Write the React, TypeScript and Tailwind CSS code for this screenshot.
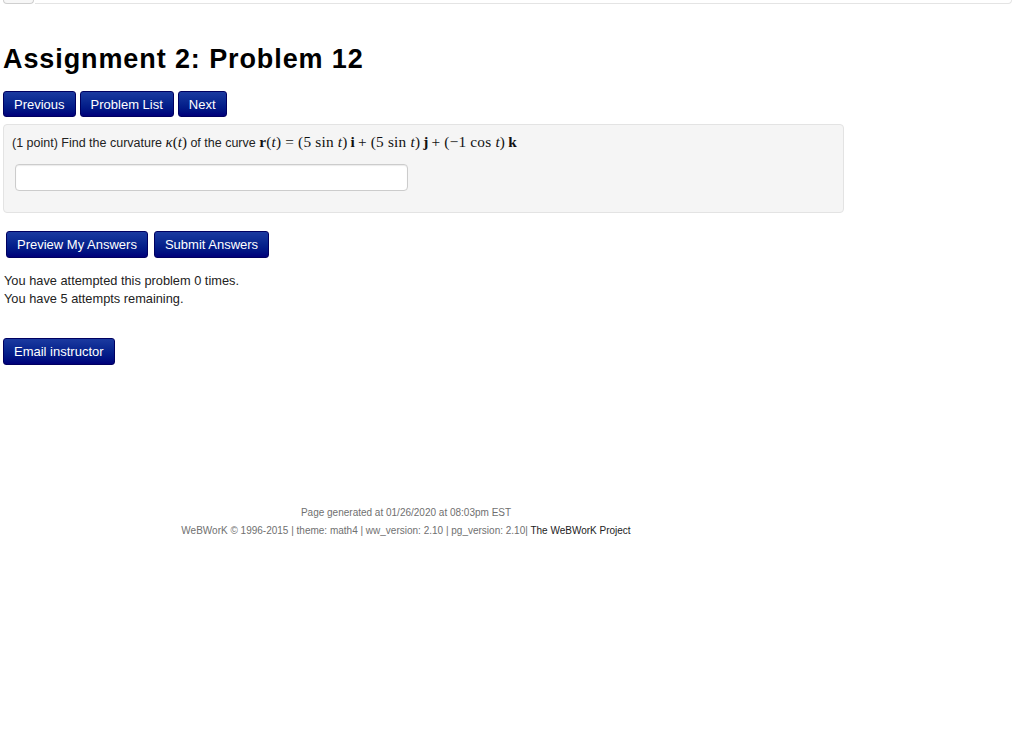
import React from "react";

const btn =
  "inline-flex items-center justify-center h-[26px] px-[10px] rounded-[3px] border border-[#000060] bg-gradient-to-b from-[#1b3aa0] to-[#00007a] text-white text-[13px] leading-none";

function MathInline() {
  return (
    <span className="font-['Liberation_Serif',serif] text-[15px] text-[#111]">
      <i>κ</i>(<i>t</i>)
    </span>
  );
}

function Curve() {
  return (
    <span className="font-['Liberation_Serif',serif] text-[15.3px] text-[#111] tracking-[0.2px]">
      <b>r</b>(<i>t</i>) = (5 sin <i>t</i>)<b className="mx-[3px]">i</b>+ (5 sin <i>t</i>)
      <b className="mx-[3px]">j</b>+ (−1 cos <i>t</i>)<b className="ml-[3px]">k</b>
    </span>
  );
}

export default function App() {
  return (
    <div className="min-h-[735px] bg-white font-['Liberation_Sans',Arial,sans-serif] text-[#222]">
      <div className="flex h-[4px] pr-[12px]">
        <div className="ml-[3px] w-[31px] border border-t-0 border-[#cfcfcf] rounded-b-[4px] bg-[#f7f7f7]" />
        <div className="ml-[1px] flex-1 border-b border-r border-[#e4e4e4] rounded-br-[4px]" />
      </div>

      <div className="px-[3px]">
        <h1 className="mt-[38px] text-[27px] font-bold leading-[34px] tracking-[0.9px] text-black">
          Assignment 2: Problem 12
        </h1>

        <div className="mt-[15px] flex gap-[4px]">
          <button className={btn}>Previous</button>
          <button className={btn}>Problem List</button>
          <button className={btn}>Next</button>
        </div>

        <div className="mt-[7px] w-[841px] h-[89px] rounded-[4px] border border-[#e3e3e3] bg-[#f5f5f5] pl-[8px] pt-[8px]">
          <p className="text-[12.5px] leading-[18px]">
            (1 point) Find the curvature <MathInline /> of the curve <Curve />
          </p>
          <div className="mt-[12px] ml-[3px] w-[393px] h-[27px] rounded-[4px] border border-[#cccccc] bg-white shadow-[inset_0_1px_1px_rgba(0,0,0,0.08)]" />
        </div>

        <div className="mt-[18px] ml-[3px] flex gap-[6px]">
          <button className={btn + " h-[27px] px-[10px]"}>Preview My Answers</button>
          <button className={btn + " h-[27px]"}>Submit Answers</button>
        </div>

        <div className="mt-[14px] pl-[1px] text-[12.8px] leading-[18px] text-[#222]">
          <p>You have attempted this problem 0 times.</p>
          <p>You have 5 attempts remaining.</p>
        </div>

        <div className="mt-[30px]">
          <button className={btn + " h-[27px]"}>Email instructor</button>
        </div>

        <div className="mt-[139px] w-[806px] text-center text-[10px] leading-[18px] text-[#707070]">
          <p>Page generated at 01/26/2020 at 08:03pm EST</p>
          <p>
            WeBWorK © 1996-2015 | theme: math4 | ww_version: 2.10 | pg_version: 2.10|{" "}
            <a className="text-[#222]">The WeBWorK Project</a>
          </p>
        </div>
      </div>
    </div>
  );
}
